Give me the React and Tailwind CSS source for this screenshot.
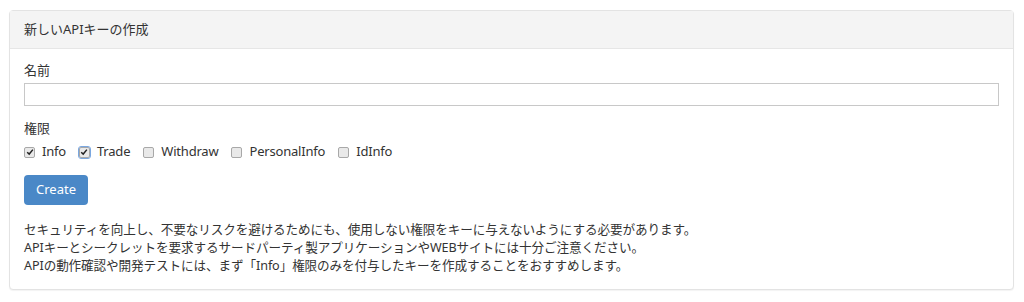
import React from "react";

function Box({ checked, focus }) {
  return (
    <span
      className={`relative inline-flex h-[11px] w-[11px] items-center justify-center rounded-[2px] border border-[#a8a8a8] bg-[#e9e9e9] ${focus ? "outline outline-1 outline-[#7aa7e0]" : ""}`}
    >
      {checked && (
        <svg viewBox="0 0 10 10" className="h-[8px] w-[8px]">
          <path d="M1.5 5.2 L4 7.6 L8.6 2" fill="none" stroke="#222" strokeWidth="1.8" />
        </svg>
      )}
    </span>
  );
}

export default function App() {
  const items = [
    { label: "Info", checked: true },
    { label: "Trade", checked: true, focus: true },
    { label: "Withdraw" },
    { label: "PersonalInfo" },
    { label: "IdInfo" },
  ];
  return (
    <div
      className="bg-white pl-[9px] pr-[10px] pt-[10px] pb-[11px] text-[13px] text-[#333]"
      style={{ fontFamily: '"Noto Sans", "Noto Sans CJK JP", sans-serif' }}
    >
      <div className="rounded-[4px] border border-[#e3e3e3] bg-white shadow-[0_1px_1px_rgba(0,0,0,0.05)]">
        <div className="flex h-[38px] items-center border-b border-[#e6e6e6] bg-[#f4f4f4] px-[14px] leading-none">
          新しいAPIキーの作成
        </div>
        <div className="px-[14px] pt-[12px] pb-[14px]">
          <div className="leading-[18px]">名前</div>
          <div className="mt-[4px] h-[23px] border border-[#c8c8c8] bg-white" />
          <div className="mt-[13px] leading-[18px]">権限</div>
          <div className="mt-[6px] flex h-[18px] items-center">
            {items.map((it, i) => (
              <label key={i} className="mr-[13px] flex items-center">
                <Box checked={it.checked} focus={it.focus} />
                <span className="ml-[7px] tracking-[-0.2px]">{it.label}</span>
              </label>
            ))}
          </div>
          <button className="mt-[14px] h-[30px] rounded-[4px] bg-[#4a88c7] px-[12px] text-[13px] text-white">
            Create
          </button>
          <div className="mt-[16px] text-[12.6px] leading-[18px] tracking-[-0.1px]">
            <p>セキュリティを向上し、不要なリスクを避けるためにも、使用しない権限をキーに与えないようにする必要があります。</p>
            <p>APIキーとシークレットを要求するサードパーティ製アプリケーションやWEBサイトには十分ご注意ください。</p>
            <p>APIの動作確認や開発テストには、まず「Info」権限のみを付与したキーを作成することをおすすめします。</p>
          </div>
        </div>
      </div>
    </div>
  );
}
